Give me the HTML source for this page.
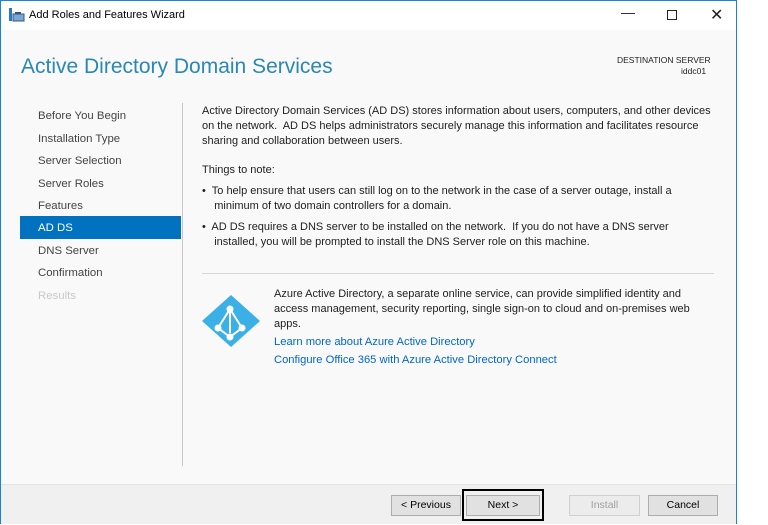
<!DOCTYPE html>
<html><head><style>
*{margin:0;padding:0;box-sizing:border-box}
body{width:768px;height:525px;background:#fff;font-family:"Liberation Sans",sans-serif;position:relative;overflow:hidden;color:#1e1e1e}
.win{position:absolute;left:0;top:0;width:737px;height:524px;border:1px solid #1883d7;background:#f9f9f9}
.title{position:absolute;left:0;top:0;width:735px;height:29px;background:#fff}
.t{position:absolute;white-space:nowrap;font-size:10.4px}
.nav{position:absolute;left:37px;font-size:11.4px;color:#444}
.p{position:absolute;left:201px;font-size:11px;line-height:15px;white-space:nowrap;color:#1e1e1e}
.btn{position:absolute;top:494px;height:21px;border:1px solid #adadad;background:#e1e1e1;font-size:10.5px;text-align:center;line-height:19px;color:#000}
a{color:#0066cc;text-decoration:none}
</style></head><body>
<div class="win">
<div class="title"></div>
<svg style="position:absolute;left:8px;top:7px" width="16" height="14" viewBox="0 0 16 14"><rect x="0" y="0" width="3" height="13" fill="#2b79c2"/><rect x="4" y="6" width="11" height="7" fill="#7aa7d6" stroke="#35577e" stroke-width="1"/><rect x="6" y="4" width="6" height="2" fill="#35577e"/></svg>
<div class="t" style="left:28px;top:8px;font-size:11px;color:#000">Add Roles and Features Wizard</div>
<div class="t" style="left:620px;top:3px;font-size:14px;color:#222">&#8212;</div>
<div style="position:absolute;left:666px;top:9px;width:10px;height:10px;border:1px solid #222"></div>
<div class="t" style="left:709px;top:4px;font-size:16px;color:#222">&#10005;</div>
<div class="t" style="left:20px;top:54px;font-size:21px;color:#2b87b5">Active Directory Domain Services</div>
<div class="t" style="left:616px;top:54px;font-size:8.5px;color:#222">DESTINATION SERVER</div>
<div class="t" style="left:680px;top:65px;font-size:8.5px;color:#222">iddc01</div>
<div class="nav" style="top:109px">Before You Begin</div>
<div class="nav" style="top:132px">Installation Type</div>
<div class="nav" style="top:154px">Server Selection</div>
<div class="nav" style="top:177px">Server Roles</div>
<div class="nav" style="top:199px">Features</div>
<div style="position:absolute;left:19px;top:215px;width:161px;height:23px;background:#0072c0"></div>
<div class="nav" style="top:221px;color:#fff">AD DS</div>
<div class="nav" style="top:244px">DNS Server</div>
<div class="nav" style="top:266px">Confirmation</div>
<div class="nav" style="top:289px;color:#c8c8c8">Results</div>
<div style="position:absolute;left:181px;top:102px;width:1px;height:363px;background:#c8c8c8"></div>
<div class="p" style="top:103px">Active Directory Domain Services (AD DS) stores information about users, computers, and other devices<br>on the network.&nbsp; AD DS helps administrators securely manage this information and facilitates resource<br>sharing and collaboration between users.</div>
<div class="p" style="top:162px">Things to note:</div>
<div class="p" style="top:183px">•&nbsp; To help ensure that users can still log on to the network in the case of a server outage, install a<br>&nbsp;&nbsp;&nbsp;&nbsp;minimum of two domain controllers for a domain.</div>
<div class="p" style="top:219px">•&nbsp; AD DS requires a DNS server to be installed on the network.&nbsp; If you do not have a DNS server<br>&nbsp;&nbsp;&nbsp;&nbsp;installed, you will be prompted to install the DNS Server role on this machine.</div>
<div style="position:absolute;left:201px;top:272px;width:512px;height:1px;background:#d6d6d6"></div>
<svg style="position:absolute;left:200px;top:294px" width="60" height="52" viewBox="0 0 60 52"><polygon points="30,0 59,26 30,52 1,26" fill="#3bb0e6"/><g stroke="#fff" stroke-width="2" fill="none"><line x1="29" y1="14" x2="17" y2="33"/><line x1="29" y1="14" x2="41" y2="33"/><line x1="17" y1="33" x2="29" y2="42"/><line x1="41" y1="33" x2="29" y2="42"/><line x1="29" y1="17" x2="29" y2="38"/></g><g fill="#fff"><circle cx="29" cy="14" r="3.5"/><circle cx="17" cy="33" r="3.5"/><circle cx="41" cy="33" r="3.5"/><circle cx="29" cy="42" r="3.5"/></g></svg>
<div class="p" style="left:273px;top:286px">Azure Active Directory, a separate online service, can provide simplified identity and<br>access management, security reporting, single sign-on to cloud and on-premises web<br>apps.</div>
<div class="p" style="left:273px;top:334px;font-size:11.2px"><a>Learn more about Azure Active Directory</a></div>
<div class="p" style="left:273px;top:352px;font-size:11.2px"><a>Configure Office 365 with Azure Active Directory Connect</a></div>
<div style="position:absolute;left:0;top:483px;width:735px;height:40px;background:#f0f0f0;border-top:1px solid #e3e3e3"></div>
<div class="btn" style="left:390px;width:70px">&lt; Previous</div>
<div style="position:absolute;left:461px;top:488px;width:82px;height:32px;border:2px solid #000;background:#f0f0f0"></div>
<div class="btn" style="left:465px;top:494px;width:74px">Next &gt;</div>
<div class="btn" style="left:568px;width:71px;color:#a0a0a0;background:#ececec;border-color:#d0d0d0">Install</div>
<div class="btn" style="left:647px;width:70px">Cancel</div>
</div>
</body></html>
